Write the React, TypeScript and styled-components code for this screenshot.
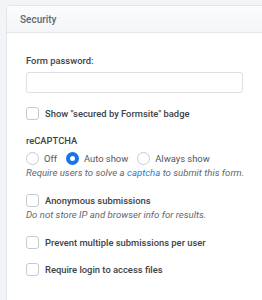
import styled, { createGlobalStyle } from 'styled-components';

const GlobalStyle = createGlobalStyle`
  html, body {
    margin: 0;
    padding: 0;
    background: #f2f4f7;
    font-family: Roboto, "Liberation Sans", sans-serif;
    overflow: hidden;
  }
`;

const Page = styled.div`
  width: 262px;
  height: 300px;
  padding: 5px 0 0 6px;
  box-sizing: border-box;
  overflow: hidden;
`;

const Card = styled.section`
  width: 290px;
  height: 320px;
  background: #fff;
  border: 1px solid #e2e6ea;
  border-radius: 3px;
  box-sizing: border-box;
`;

const CardHeader = styled.header`
  height: 27px;
  box-sizing: border-box;
  display: flex;
  align-items: center;
  padding: 0 13px;
  background: linear-gradient(#fbfcfd, #f3f5f7);
  border-bottom: 1px solid #e3e6e9;
  color: #5d6978;
  font-size: 10px;
  font-weight: 500;
`;

const CardBody = styled.div`
  padding: 22px 0 0 19px;
  display: flex;
  flex-direction: column;
`;

const FieldLabel = styled.div<{ $top?: number }>`
  margin-top: ${p => p.$top ?? 0}px;
  font-size: 9.4px;
  font-weight: 500;
  color: #3c4248;
  line-height: 12px;
`;

const TextInput = styled.input`
  width: 217px;
  height: 21px;
  box-sizing: border-box;
  margin: 5px 0 0;
  border: 1px solid #dcdfe3;
  border-radius: 3px;
  background: #fff;
`;

const CheckRow = styled.label<{ $top: number }>`
  display: flex;
  align-items: center;
  gap: 6px;
  height: 13px;
  margin-top: ${p => p.$top}px;
  font-size: 9.4px;
  font-weight: 500;
  color: #3c4248;
  line-height: 12px;
`;

const Box = styled.span`
  width: 13px;
  height: 13px;
  box-sizing: border-box;
  border: 1px solid #c6cbd1;
  border-radius: 3px;
  background: #fff;
  flex: none;
`;

const RadioGroup = styled.div`
  display: flex;
  align-items: center;
  height: 13px;
  margin-top: 5px;
  gap: 9px;
`;

const RadioItem = styled.label`
  display: flex;
  align-items: center;
  gap: 5px;
  font-size: 9.4px;
  color: #50575e;
  line-height: 12px;
`;

const Radio = styled.span<{ $on?: boolean }>`
  width: 13px;
  height: 13px;
  border-radius: 50%;
  box-sizing: border-box;
  flex: none;
  border: ${p => (p.$on ? '4px solid #1a73e8' : '1px solid #c6cbd1')};
  background: #fff;
`;

const Help = styled.div`
  margin-top: 2px;
  font-size: 9.6px;
  font-style: italic;
  color: #5f666d;
  line-height: 12px;
`;

const Link = styled.span`
  color: #2a7bd4;
`;

export default function App() {
  return (
    <Page>
      <GlobalStyle />
      <Card>
        <CardHeader>Security</CardHeader>
        <CardBody>
          <FieldLabel>Form password:</FieldLabel>
          <TextInput type="text" />
          <CheckRow $top={14}>
            <Box />
            Show "secured by Formsite" badge
          </CheckRow>
          <FieldLabel $top={15}>reCAPTCHA</FieldLabel>
          <RadioGroup>
            <RadioItem><Radio />Off</RadioItem>
            <RadioItem><Radio $on />Auto show</RadioItem>
            <RadioItem><Radio />Always show</RadioItem>
          </RadioGroup>
          <Help>
            Require users to solve a <Link>captcha</Link> to submit this form.
          </Help>
          <CheckRow $top={15}>
            <Box />
            Anonymous submissions
          </CheckRow>
          <Help>Do not store IP and browser info for results.</Help>
          <CheckRow $top={15}>
            <Box />
            Prevent multiple submissions per user
          </CheckRow>
          <CheckRow $top={14}>
            <Box />
            Require login to access files
          </CheckRow>
        </CardBody>
      </Card>
    </Page>
  );
}
